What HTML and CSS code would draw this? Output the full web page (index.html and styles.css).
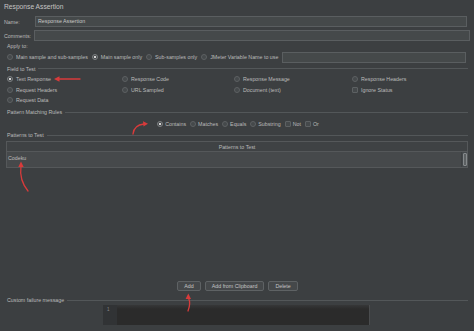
FILE: index.html
```html
<!DOCTYPE html>
<html>
<head>
<meta charset="utf-8">
<title>Response Assertion</title>
<link rel="stylesheet" href="styles.css">
</head>
<body>
<div class="page">
  <div class="title">Response Assertion</div>
  <div class="form-row name-row"><span class="label">Name:</span><div class="input">Response Assertion</div></div>
  <div class="form-row comments-row"><span class="label">Comments:</span><div class="input"></div></div>
  <div class="apply-label">Apply to:</div>
  <div class="apply-row">
    <span class="opt"><i class="radio"></i>Main sample and sub-samples</span>
    <span class="opt"><i class="radio on"></i>Main sample only</span>
    <span class="opt"><i class="radio"></i>Sub-samples only</span>
    <span class="opt"><i class="radio"></i>JMeter Variable Name to use</span>
    <div class="input var-input"></div>
  </div>
  <div class="titled field-title"><span>Field to Test</span></div>
  <div class="field-grid">
    <span class="opt"><i class="radio on"></i>Text Response</span>
    <span class="opt"><i class="radio"></i>Response Code</span>
    <span class="opt"><i class="radio"></i>Response Message</span>
    <span class="opt"><i class="radio"></i>Response Headers</span>
    <span class="opt"><i class="radio"></i>Request Headers</span>
    <span class="opt"><i class="radio"></i>URL Sampled</span>
    <span class="opt"><i class="radio"></i>Document (text)</span>
    <span class="opt"><i class="check"></i>Ignore Status</span>
    <span class="opt"><i class="radio"></i>Request Data</span>
  </div>
  <div class="titled rules-title"><span>Pattern Matching Rules</span></div>
  <div class="rules-row">
    <span class="opt"><i class="radio on"></i>Contains</span>
    <span class="opt"><i class="radio"></i>Matches</span>
    <span class="opt"><i class="radio"></i>Equals</span>
    <span class="opt"><i class="radio"></i>Substring</span>
    <span class="opt"><i class="check"></i>Not</span>
    <span class="opt"><i class="check"></i>Or</span>
  </div>
  <div class="titled patterns-title"><span>Patterns to Test</span></div>
  <div class="table">
    <div class="thead">Patterns to Test</div>
    <div class="tbody">
      <div class="cell">Codeku</div>
      <div class="scroll"><div class="thumb"></div></div>
    </div>
  </div>
  <div class="spacer"></div>
  <div class="buttons">
    <span class="btn">Add</span>
    <span class="btn">Add from Clipboard</span>
    <span class="btn">Delete</span>
  </div>
  <div class="titled custom-title"><span>Custom failure message</span></div>
  <div class="editor">
    <div class="gutter">1</div>
    <div class="code"></div>
  </div>
</div>
<svg class="annotations" width="474" height="331" viewBox="0 0 474 331">
  <g fill="none" stroke="#d83b3b" stroke-width="1.3" stroke-linecap="round">
    <path d="M80 79 L58 79"/>
    <path d="M133 134 Q134 125 144 124"/>
    <path d="M28 191 Q19 180 21 166"/>
    <path d="M188 311 Q191 303 188.5 298"/>
  </g>
  <g fill="#d83b3b">
    <polygon points="54,79 59.5,76.3 59.5,81.7"/>
    <polygon points="148,123.8 143,121.2 143.5,126.6"/>
    <polygon points="21,161.5 18.3,167 23.7,167"/>
    <polygon points="188.3,293.5 185.6,299 191,299"/>
  </g>
</svg>
</body>
</html>
```
FILE: styles.css
```css
* { box-sizing: border-box; }

html, body {
  margin: 0;
  padding: 0;
  background: #3c3f41;
}

body {
  position: relative;
  width: 474px;
  height: 331px;
  overflow: hidden;
  font-family: "Liberation Sans", Arial, sans-serif;
  font-size: 5.3px;
  color: #bbbbbb;
}

.page {
  display: flex;
  flex-direction: column;
  width: 474px;
  height: 331px;
  padding-bottom: 6px;
}

.title {
  height: 14px;
  line-height: 14px;
  padding-left: 4px;
  font-size: 6.7px;
  color: #c4c4c4;
}

.form-row {
  display: flex;
  align-items: center;
  height: 11px;
}

.name-row { margin-top: 2px; padding-right: 7px; }
.comments-row { margin-top: 3px; padding-right: 4px; }

.name-row .label { width: 35px; padding-left: 4px; }
.comments-row .label { width: 34px; padding-left: 4px; }

.input {
  flex: 1;
  height: 11px;
  line-height: 9px;
  padding-left: 2px;
  background: #45494a;
  border: 1px solid #5a5e60;
  color: #c8c8c8;
}

.apply-label {
  height: 10px;
  line-height: 10px;
  padding-left: 7px;
}

.apply-row {
  display: flex;
  align-items: center;
  height: 12px;
  padding-left: 7px;
  padding-right: 8px;
  gap: 4px;
}

.opt {
  display: inline-flex;
  align-items: center;
  white-space: nowrap;
}

.radio, .check {
  display: inline-block;
  width: 6px;
  height: 6px;
  margin-right: 3px;
  background: #45494b;
  border: 1px solid #5d6163;
  flex: none;
}

.radio { border-radius: 50%; }
.check { border-radius: 1px; }

.radio.on {
  border-color: #7d8183;
  background: radial-gradient(circle, #d4d4d4 0 1.1px, #46494b 1.5px);
}

.titled {
  display: flex;
  align-items: center;
  padding-left: 7px;
  padding-right: 6px;
}

.titled::after {
  content: "";
  flex: 1;
  height: 1px;
  margin-left: 3px;
  background: #535759;
}

.field-title { height: 11px; }
.rules-title { height: 13px; }
.patterns-title { height: 11.5px; }
.custom-title { height: 10px; }

.field-grid {
  display: grid;
  grid-template-columns: 115px 112px 118px 1fr;
  grid-auto-rows: 10.5px;
  align-items: center;
  padding-left: 7px;
}

.rules-row {
  display: flex;
  justify-content: center;
  align-items: center;
  gap: 4px;
  height: 11px;
  padding-left: 2px;
}

.rules-row .radio, .rules-row .check { margin-right: 2px; }

.table {
  margin: 0 6px;
  border: 1px solid #55585a;
}

.thead {
  height: 10px;
  line-height: 10px;
  text-align: center;
  background: #3f4244;
  border-bottom: 1px solid #55585a;
}

.tbody {
  display: flex;
  height: 15px;
  background: #46494b;
}

.cell {
  flex: 1;
  padding: 3px 0 0 1px;
  line-height: 6px;
}

.scroll {
  width: 6px;
  padding: 1px;
  background: #43474a;
  border-left: 1px solid #3d4042;
}

.thumb {
  width: 4px;
  height: 100%;
  background: #5c6062;
  border: 1px solid #85898b;
  border-radius: 1px;
}

.spacer { flex: 1; }

.buttons {
  display: flex;
  justify-content: center;
  gap: 4px;
  height: 10px;
  margin-bottom: 4px;
  padding-left: 1px;
}

.btn {
  display: inline-flex;
  align-items: center;
  height: 10px;
  padding: 0 6px;
  background: #45484a;
  border: 1px solid #5e6264;
  border-radius: 2px;
  color: #c4c4c4;
}

.editor {
  display: flex;
  height: 20px;
  width: 267px;
  margin-left: 103px;
}

.gutter {
  width: 14px;
  padding: 2px 0 0 4px;
  line-height: 5px;
  font-size: 4.5px;
  background: #313335;
  color: #8a8a8a;
}

.code {
  flex: 1;
  background: linear-gradient(#363738, #2b2b2b 4px);
  border-right: 1px solid #4a4c4e;
}

.annotations {
  position: absolute;
  top: 0;
  left: 0;
  pointer-events: none;
}
```
